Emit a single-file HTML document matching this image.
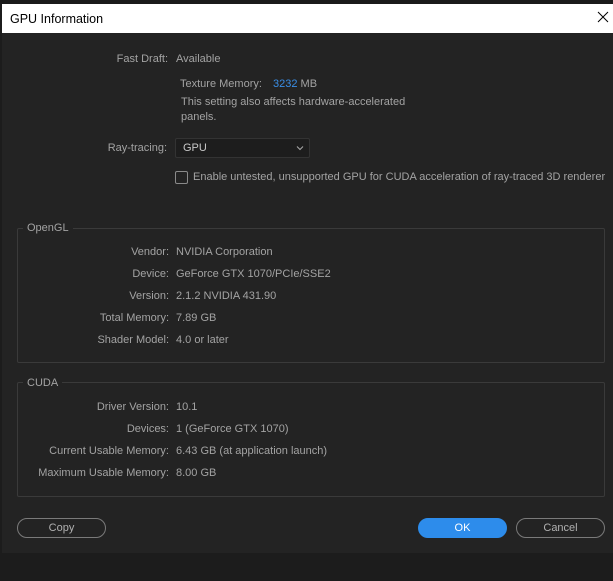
<!DOCTYPE html>
<html><head><style>
*{margin:0;padding:0;box-sizing:border-box}
body{width:613px;height:581px;background:#1c1c1c;position:relative;overflow:hidden;font-family:"Liberation Sans",sans-serif;font-size:11px;color:#a3a3a3}
.top{position:absolute;left:0;top:0;width:613px;height:4px;background:#1a1a1a}
.title{position:absolute;left:2px;top:4px;width:611px;height:29px;background:#fff;color:#000;font-size:12.5px}
.title span{position:absolute;left:8px;top:8px}
.x{position:absolute;right:3px;top:6px}
.dlg{position:absolute;left:2px;top:33px;width:611px;height:520px;background:#232323}
.t{position:absolute;white-space:nowrap;line-height:14px}
.r{text-align:right}
.box{position:absolute;border:1px solid #3a3a3a;border-radius:2px}
.leg{position:absolute;background:#232323;padding:0 4px;line-height:14px}
.btn{position:absolute;height:20px;border:1px solid #7a7a7a;border-radius:10px;text-align:center;line-height:18px;color:#b0b0b0}
</style></head><body>
<div class="top"></div>
<div class="title"><span>GPU Information</span>
<svg class="x" width="14" height="14" viewBox="0 0 14 14"><path d="M2 2L12 12M12 2L2 12" stroke="#000" stroke-width="1"/></svg></div>
<div class="dlg"></div>
<div class="t r" style="right:445px;top:52px">Fast Draft:</div>
<div class="t" style="left:176px;top:52px">Available</div>
<div class="t" style="left:180px;top:77px">Texture Memory:</div>
<div class="t" style="left:273px;top:77px"><span style="color:#3a8ee6">3232</span> MB</div>
<div class="t" style="left:181px;top:95px">This setting also affects hardware-accelerated</div>
<div class="t" style="left:181px;top:110px">panels.</div>
<div class="t r" style="right:446px;top:141px">Ray-tracing:</div>
<div style="position:absolute;left:175px;top:138px;width:135px;height:20px;background:#1d1d1d;border:1px solid #333;border-radius:2px"></div>
<div class="t" style="left:183px;top:141px;color:#c8c8c8">GPU</div>
<svg style="position:absolute;left:296px;top:144px" width="8" height="8" viewBox="0 0 8 8"><path d="M1 2.5L4 5.5L7 2.5" stroke="#aaa" fill="none"/></svg>
<div style="position:absolute;left:175px;top:171px;width:13px;height:13px;border:1.5px solid #8a8a8a;border-radius:2px"></div>
<div class="t" style="left:193px;top:170px">Enable untested, unsupported GPU for CUDA acceleration of ray-traced 3D renderer</div>

<div class="box" style="left:17px;top:228px;width:588px;height:135px"></div>
<div class="leg" style="left:23px;top:221px">OpenGL</div>
<div class="t r" style="right:444px;top:245px">Vendor:</div><div class="t" style="left:176px;top:245px">NVIDIA Corporation</div>
<div class="t r" style="right:444px;top:267px">Device:</div><div class="t" style="left:176px;top:267px">GeForce GTX 1070/PCIe/SSE2</div>
<div class="t r" style="right:444px;top:289px">Version:</div><div class="t" style="left:176px;top:289px">2.1.2 NVIDIA 431.90</div>
<div class="t r" style="right:444px;top:311px">Total Memory:</div><div class="t" style="left:176px;top:311px">7.89 GB</div>
<div class="t r" style="right:444px;top:333px">Shader Model:</div><div class="t" style="left:176px;top:333px">4.0 or later</div>

<div class="box" style="left:17px;top:382px;width:588px;height:115px"></div>
<div class="leg" style="left:23px;top:376px">CUDA</div>
<div class="t r" style="right:444px;top:400px">Driver Version:</div><div class="t" style="left:176px;top:400px">10.1</div>
<div class="t r" style="right:444px;top:422px">Devices:</div><div class="t" style="left:176px;top:422px">1 (GeForce GTX 1070)</div>
<div class="t r" style="right:444px;top:444px">Current Usable Memory:</div><div class="t" style="left:176px;top:444px">6.43 GB (at application launch)</div>
<div class="t r" style="right:444px;top:466px">Maximum Usable Memory:</div><div class="t" style="left:176px;top:466px">8.00 GB</div>

<div class="btn" style="left:17px;top:518px;width:89px">Copy</div>
<div class="btn" style="left:418px;top:518px;width:89px;background:#2d8ceb;border-color:#2d8ceb;color:#fff">OK</div>
<div class="btn" style="left:516px;top:518px;width:89px">Cancel</div>
</body></html>
